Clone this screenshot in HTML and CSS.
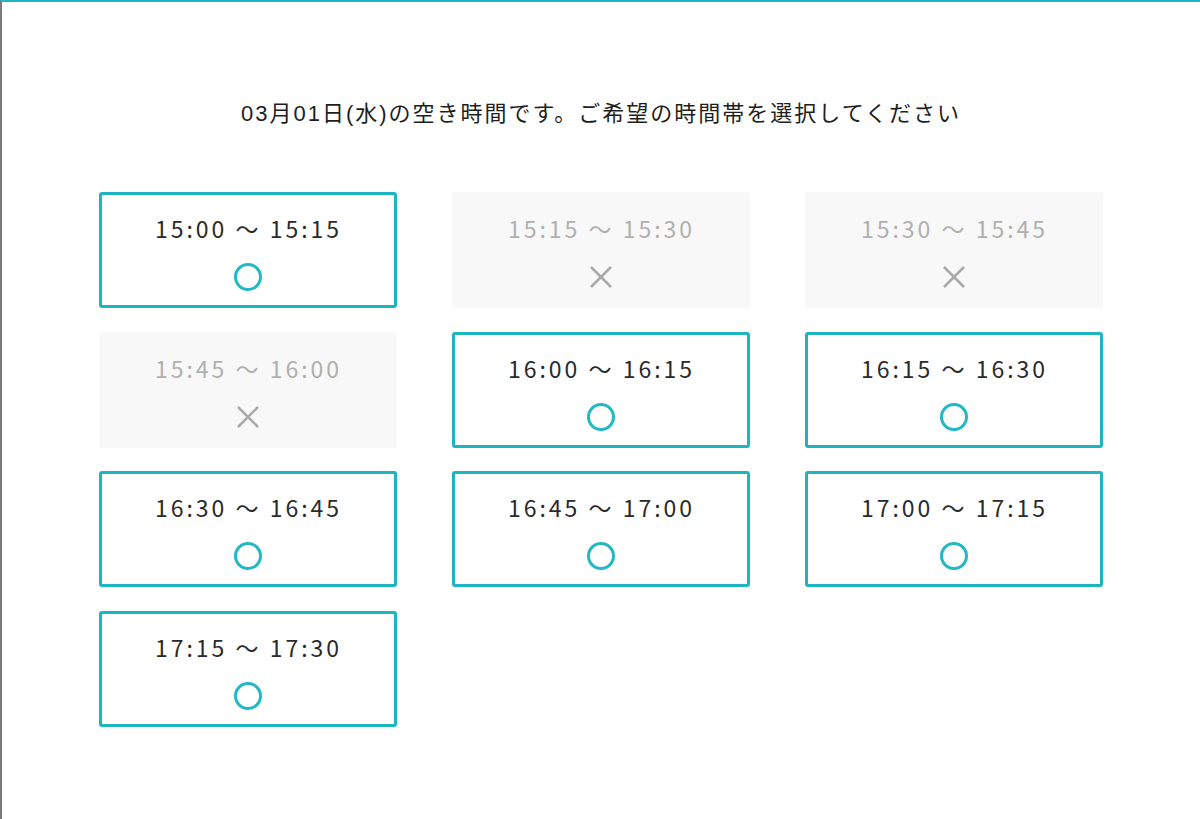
FILE: index.html
```html
<!DOCTYPE html>
<html lang="ja">
<head>
<meta charset="utf-8">
<title>空き時間</title>
<link rel="stylesheet" href="styles.css">
</head>
<body>
<div class="frame">
  <h1 class="title">03月01日(水)の空き時間です。ご希望の時間帯を選択してください</h1>
  <div class="grid">
    <div class="slot open"><span class="time">15:00 ～ 15:15</span><span class="mark circle"></span></div>
    <div class="slot closed"><span class="time">15:15 ～ 15:30</span><svg class="mark cross" viewBox="0 0 24 24"><path d="M2 2L22 22M22 2L2 22"/></svg></div>
    <div class="slot closed"><span class="time">15:30 ～ 15:45</span><svg class="mark cross" viewBox="0 0 24 24"><path d="M2 2L22 22M22 2L2 22"/></svg></div>
    <div class="slot closed"><span class="time">15:45 ～ 16:00</span><svg class="mark cross" viewBox="0 0 24 24"><path d="M2 2L22 22M22 2L2 22"/></svg></div>
    <div class="slot open"><span class="time">16:00 ～ 16:15</span><span class="mark circle"></span></div>
    <div class="slot open"><span class="time">16:15 ～ 16:30</span><span class="mark circle"></span></div>
    <div class="slot open"><span class="time">16:30 ～ 16:45</span><span class="mark circle"></span></div>
    <div class="slot open"><span class="time">16:45 ～ 17:00</span><span class="mark circle"></span></div>
    <div class="slot open"><span class="time">17:00 ～ 17:15</span><span class="mark circle"></span></div>
    <div class="slot open"><span class="time">17:15 ～ 17:30</span><span class="mark circle"></span></div>
  </div>
</div>
</body>
</html>
```
FILE: styles.css
```css
html, body {
  margin: 0;
  padding: 0;
  background: #fff;
}
.frame {
  box-sizing: border-box;
  height: 819px;
  border-top: 2px solid #1db5c2;
  border-left: 2px solid #7a7a7a;
  font-family: "Noto Sans CJK JP", "Noto Sans", sans-serif;
  color: #222;
  padding-top: 96px;
}
.title {
  margin: 0;
  text-align: center;
  font-family: "Liberation Sans", "Noto Sans CJK JP", sans-serif;
  font-weight: 400;
  font-size: 22px;
  line-height: 32px;
  letter-spacing: 2px;
  color: #1e1e1e;
}
.grid {
  margin: 62px auto 0;
  width: 1004px;
  display: grid;
  grid-template-columns: repeat(3, 298px);
  column-gap: 55px;
  row-gap: 23.5px;
}
.slot {
  box-sizing: border-box;
  height: 116px;
  display: flex;
  flex-direction: column;
  align-items: center;
  padding-top: 22px;
  border-radius: 3px;
}
.slot.open {
  border: 3px solid #1db5c2;
  padding-top: 19px;
  background: #fff;
}
.slot.closed {
  background: #f8f8f8;
}
.time {
  font-size: 23px;
  line-height: 28px;
  letter-spacing: 3px;
  padding-left: 1px;
  color: #2a2a2a;
}
.closed .time {
  color: #b0b0b0;
}
.mark {
  margin-top: 21px;
  display: block;
}
.circle {
  box-sizing: border-box;
  width: 28px;
  height: 28px;
  border: 3px solid #22b8c5;
  border-radius: 50%;
}
.cross {
  width: 28px;
  height: 28px;
  padding: 2px;
  box-sizing: border-box;
  stroke: #aaaaaa;
  stroke-width: 2.6;
  fill: none;
}
```
